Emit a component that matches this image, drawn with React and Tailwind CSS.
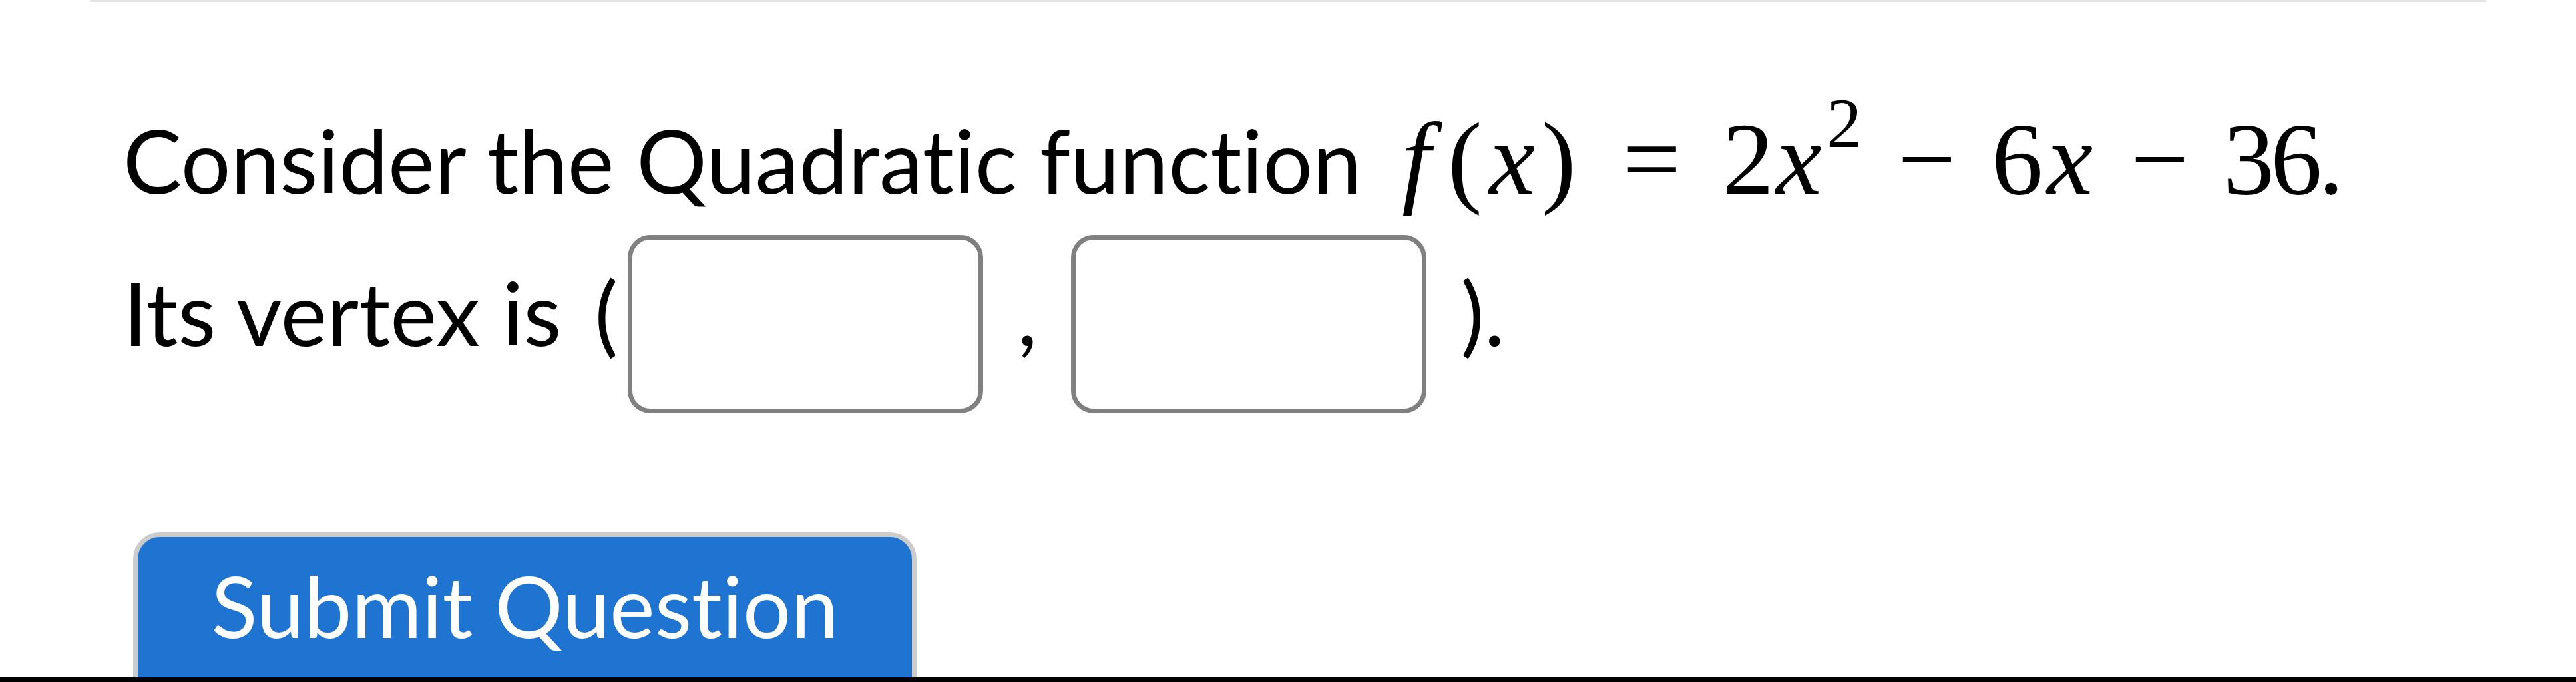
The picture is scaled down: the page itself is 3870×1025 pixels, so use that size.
const Cell = ({ w, children, className = '' }) => (
  <span className={`inline-flex justify-center ${w} ${className}`}>{children}</span>
)

const Formula = () => (
  <span className="font-['Liberation_Serif',serif] text-[155px] leading-none">
    <Cell w="w-[84px] ml-[40px]"><i>f</i></Cell>
    <Cell w="w-[62px]">(</Cell>
    <Cell w="w-[80px]"><i>x</i></Cell>
    <Cell w="w-[60px]">)</Cell>
    <Cell w="w-[220px]">=</Cell>
    <Cell w="w-[69px]">2</Cell>
    <Cell w="w-[83px]"><i>x</i></Cell>
    <Cell w="w-[54px]" className="text-[106px] align-[70px]">2</Cell>
    <Cell w="w-[194px]">−</Cell>
    <Cell w="w-[78px]">6</Cell>
    <Cell w="w-[80px]"><i>x</i></Cell>
    <Cell w="w-[190px]">−</Cell>
    <span className="tracking-[-6px]">36.</span>
  </span>
)

const AnswerBox = () => (
  <input
    type="text"
    className="inline-block align-middle w-[534px] h-[268px] border-[7px] border-[#808080] rounded-[34px] bg-white outline-none"
  />
)

export default function App() {
  return (
    <div className="w-[3870px] h-[1025px] bg-white overflow-hidden flex flex-col font-['Lato',sans-serif] text-black [font-variant-ligatures:none]">
      <div className="mx-[135px] h-[3px] bg-[#e4e4e4]" />
      <div className="flex-1 min-h-0 overflow-hidden pl-[185px] pt-[130px]">
        <p className="text-[132px] leading-[170px] whitespace-nowrap">
          <span>Consider the Quadratic function</span>
          <Formula />
        </p>
        <p className="mt-[28px] text-[132px] leading-[170px] whitespace-nowrap">
          <span>Its vertex is</span>
          <span className="ml-[50px]">(</span>
          <span className="ml-[14px]"><AnswerBox /></span>
          <span className="ml-[52px]">,</span>
          <span className="ml-[50px]"><AnswerBox /></span>
          <span className="ml-[52px]">).</span>
        </p>
        <div className="mt-[179px] ml-[15px]">
          <button
            type="button"
            className="w-[1177px] h-[260px] pb-[40px] bg-[#1f74d1] border-[7px] border-[#cccccc] rounded-[40px] text-white text-[128px] leading-none font-['Lato',sans-serif]"
          >
            Submit Question
          </button>
        </div>
      </div>
      <div className="h-[7px] bg-black" />
    </div>
  )
}
